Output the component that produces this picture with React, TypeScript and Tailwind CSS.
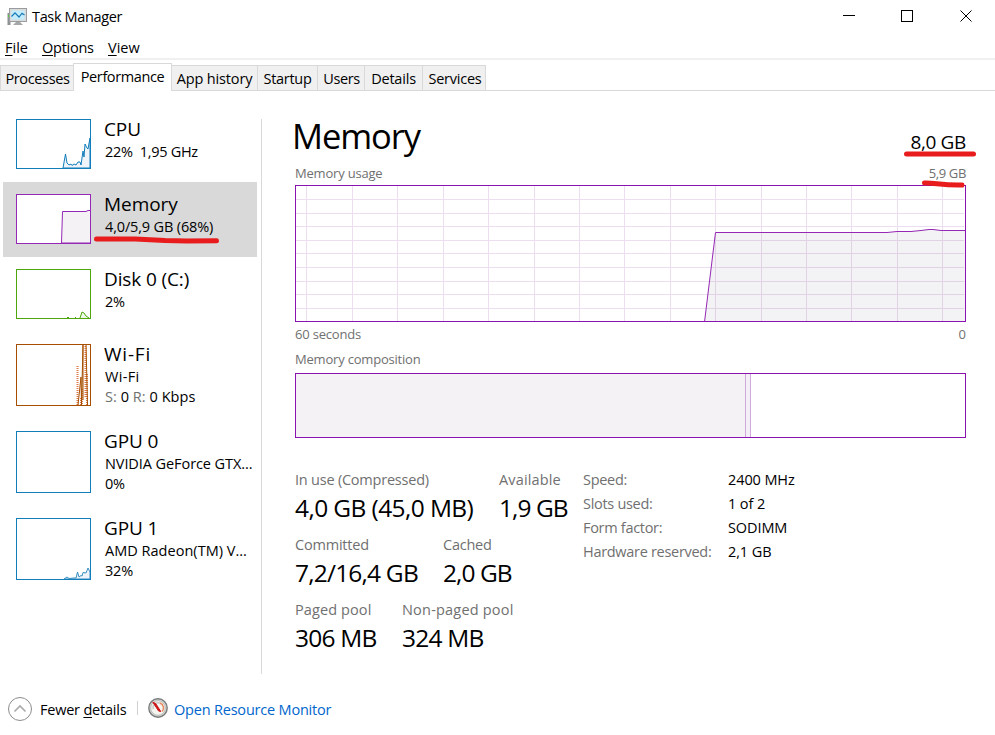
import type { ReactNode } from "react"
import clsx from "clsx"

const tabs = [
  { label: "Processes", width: "w-[73px]", tracking: "tracking-[-0.35px] pl-px" },
  { label: "Performance", width: "w-[99px]", tracking: "tracking-[-0.4px]", active: true },
  { label: "App history", width: "w-[86px]", tracking: "tracking-[-0.15px]" },
  { label: "Startup", width: "w-[60px]", tracking: "tracking-[-0.3px]" },
  { label: "Users", width: "w-[47px]", tracking: "tracking-[-0.4px] pl-px" },
  { label: "Details", width: "w-[58px]", tracking: "tracking-[-0.2px]" },
  { label: "Services", width: "w-[63px]", tracking: "tracking-[-0.25px] pl-[2px]" },
]

const specs = [
  { label: "Speed:", value: "2400 MHz" },
  { label: "Slots used:", value: "1 of 2" },
  { label: "Form factor:", value: "SODIMM" },
  { label: "Hardware reserved:", value: "2,1 GB" },
]

const gridX = [11, 57, 102, 148, 193, 239, 284, 329, 375, 420, 466, 511, 556, 602, 647]
const gridY = [14, 28, 41, 55, 68, 82, 96, 109, 123]

function MonitorIcon() {
  return (
    <svg className="w-5 h-[18px] shrink-0" viewBox="0 0 20 18">
      <rect x="0.5" y="5" width="3" height="12" fill="#8e9295" />
      <rect x="1" y="7" width="1.5" height="2" fill="#4fd33c" />
      <rect x="2.5" y="0.5" width="17" height="13" fill="#d8dadb" stroke="#9a9c9e" />
      <rect x="4.5" y="2.5" width="13" height="9" fill="#c3edfc" />
      <path d="M4.5 8.5 L8 4.8 L12 9 L15 5.2 L17.5 7" fill="none" stroke="#1979b4" strokeWidth="1.2" />
      <path d="M9 14 H13 L16 17 H6 Z" fill="#a5a7a8" />
    </svg>
  )
}

function GaugeIcon() {
  return (
    <svg className="w-5 h-5 shrink-0 -mt-[2px]" viewBox="0 0 20 20">
      <circle cx="10" cy="10" r="9.2" fill="#d9dbd8" stroke="#777b79" strokeWidth="1.4" />
      <circle cx="10" cy="10" r="7.3" fill="#f5f4ef" stroke="#aeb2af" strokeWidth="0.8" />
      <path d="M5.2 11 A5.2 5.2 0 0 1 12 5" fill="none" stroke="#c9ccca" strokeWidth="1.5" />
      <path d="M12 5 A5.4 5.4 0 0 1 14.3 13.5" fill="none" stroke="#e78a61" strokeWidth="1.5" />
      <path d="M4.8 4.2 L7.6 5.4 L12.8 13.5 L10.6 13 Z" fill="#cf1419" stroke="#cf1419" strokeWidth="1" />
    </svg>
  )
}

interface ResourceProps {
  title: string
  titleClass: string
  selected?: boolean
  tall?: boolean
  graph: ReactNode
  children: ReactNode
}

function Resource({ title, titleClass, selected, tall, graph, children }: ResourceProps) {
  return (
    <div
      className={clsx(
        "flex items-start w-[254px] pt-3 pl-[13px] shrink-0",
        tall ? "h-[87px]" : "h-[75px]",
        selected && "bg-[#d9d9d9]",
      )}
    >
      {graph}
      <div className="ml-[14px] -mt-px text-[14.5px] leading-5 whitespace-nowrap">
        <div className={clsx("text-[19px] leading-[22px] -ml-px", titleClass)}>{title}</div>
        {children}
      </div>
    </div>
  )
}

function Thumb({ tall, color, children }: { tall?: boolean; color: string; children?: ReactNode }) {
  const h = tall ? 62 : 50
  return (
    <svg className={clsx("w-[75px] shrink-0 bg-white", tall ? "h-[62px]" : "h-[50px]")} viewBox={`0 0 75 ${h}`}>
      {children}
      <rect x="0.5" y="0.5" width="74" height={h - 1} fill="none" stroke={color} />
    </svg>
  )
}

function Sidebar() {
  return (
    <div className="w-[259px] shrink-0 h-[555px] mt-7 border-r border-[#d9d9d9]">
      <div className="flex flex-col -mt-3">
        <Resource
          title="CPU"
          titleClass="tracking-[-0.1px]"
          graph={
            <Thumb color="#117dbb">
              <path
                d="M47 49 L49.5 35 L51 44 L53 46 L55 45 L56 46.5 L58 45 L60 46 L62 43 L64 43 L65 46 L67 32 L68 38 L69 25 L71 29 L72 30 L74 19 V49 Z"
                fill="#eef4fa"
                stroke="#117dbb"
              />
            </Thumb>
          }
        >
          <div className="mt-[2px] leading-[19px] tracking-[-0.28px] whitespace-pre">22%  1,95 GHz</div>
        </Resource>
        <Resource
          title="Memory"
          titleClass="tracking-[-0.05px]"
          selected
          graph={
            <Thumb color="#9528b4">
              <path d="M45.5 49 L46.5 17.5 H70 L72 16.5 H75 V49 Z" fill="#f4f2f4" stroke="#9528b4" />
            </Thumb>
          }
        >
          <div className="mt-[2px] leading-[19px] tracking-[-0.15px]">4,0/5,9 GB (68%)</div>
        </Resource>
        <Resource
          title="Disk 0 (C:)"
          titleClass="tracking-[-0.12px]"
          graph={
            <Thumb color="#4da60c">
              <path d="M51 49 L52 48 L53 49 M59 49 L60 48 M64 49 L66 43 L68 44 L70 47 L73 49" fill="#eff7e9" stroke="#4da60c" />
            </Thumb>
          }
        >
          <div className="mt-[2px] leading-[19px] tracking-[-0.4px]">2%</div>
        </Resource>
        <Resource
          title="Wi-Fi"
          titleClass="tracking-[0.8px]"
          tall
          graph={
            <Thumb tall color="#a74f01">
              <path d="M61.5 61 V22 M65 61 V54 M66 45 V61 M69.5 2 V54 M71 30 V61" fill="none" stroke="#df7b49" strokeWidth="2" strokeDasharray="1 1" />
              <path d="M62 61 L65 33 L65.5 61 L67 0 V56 M69 0 L70 0 L71.5 61" fill="none" stroke="#a74f01" />
            </Thumb>
          }
        >
          <div className="mt-[2px] tracking-[0.35px]">Wi-Fi</div>
          <div className="tracking-[0.05px]">
            <span className="text-[#707070]">S:</span> 0 <span className="text-[#707070]">R:</span> 0 Kbps
          </div>
        </Resource>
        <Resource title="GPU 0" titleClass="tracking-[-0.15px]" tall graph={<Thumb tall color="#117dbb" />}>
          <div className="mt-[2px] tracking-[-0.08px]">NVIDIA GeForce GTX...</div>
          <div className="tracking-[-0.4px]">0%</div>
        </Resource>
        <Resource
          title="GPU 1"
          titleClass="tracking-[-0.15px]"
          tall
          graph={
            <Thumb tall color="#117dbb">
              <path
                d="M48 61 L51 59 L53 60.5 L58 60 L60 60 L61.5 54 L63 59 L65 57.5 L66 58 L67 54.5 L70 55 L72 50 L74 54 V61 Z"
                fill="#eef4fa"
                stroke="#3b8fc0"
              />
            </Thumb>
          }
        >
          <div className="mt-[2px] tracking-[0.02px]">AMD Radeon(TM) V...</div>
          <div className="tracking-[-0.2px]">32%</div>
        </Resource>
      </div>
    </div>
  )
}

function UsageGraph() {
  return (
    <svg className="block w-[671px] h-[137px]" viewBox="0 0 671 137">
      {gridX.map((x) => (
        <path key={x} d={`M${x + 0.5} 1 V136`} stroke="#ecdef0" />
      ))}
      {gridY.map((y) => (
        <path key={y} d={`M1 ${y + 0.5} H669`} stroke="#ecdef0" />
      ))}
      <path d="M409.5 137 L420.5 47.5 H594 L636 44.5 L647 45.5 H670 V137 Z" fill="#2b0c35" fillOpacity="0.055" />
      <path
        d="M409.5 137 L420.5 47.5 H592 L602 46.5 L616 46.5 L626 45.5 L634 44.5 L638 44.5 L646 45.5 H670"
        fill="none"
        stroke="#9528b4"
      />
      <rect x="0.5" y="0.5" width="670" height="136" fill="none" stroke="#8b12ae" />
    </svg>
  )
}

interface StatProps {
  label: string
  value: string
  className: string
  labelClass: string
  valueClass: string
}

function Stat({ label, value, className, labelClass, valueClass }: StatProps) {
  return (
    <div className={clsx("h-[65px] shrink-0 whitespace-nowrap", className)}>
      <div className={clsx("text-[14.5px] leading-5 text-[#707070]", labelClass)}>{label}</div>
      <div className={clsx("text-[24.5px] leading-9", valueClass)}>{value}</div>
    </div>
  )
}

function MemoryPanel() {
  return (
    <div className="w-[671px] ml-[33px]">
      <div className="flex justify-between h-[73px]">
        <h1 className="text-[34.5px] leading-[46px] mt-[22px] -ml-[3px] tracking-[-1.1px]">Memory</h1>
        <div className="text-[19px] leading-6 mt-[39px] tracking-[-0.35px]">8,0 GB</div>
      </div>
      <div className="flex justify-between text-[13px] leading-[19px] h-[21px] text-[#707070]">
        <span className="tracking-[-0.2px]">Memory usage</span>
        <span className="tracking-[-0.35px]">5,9 GB</span>
      </div>
      <UsageGraph />
      <div className="flex justify-between text-[13px] leading-5 mt-[2px] text-[#707070]">
        <span className="tracking-[-0.2px]">60 seconds</span>
        <span>0</span>
      </div>
      <div className="text-[13px] leading-5 mt-[5px] mb-1 text-[#707070] tracking-[-0.2px]">Memory composition</div>
      <div className="flex h-[65px] border border-[#8b12ae]">
        <div className="w-[449px] bg-[#f4f2f4]" />
        <div className="w-[6px] bg-[#f4eef6] border-x border-[#cfaada]" />
      </div>
      <div className="flex mt-8">
        <div className="w-[288px]">
          <div className="flex">
            <Stat label="In use (Compressed)" value="4,0 GB (45,0 MB)" className="w-[204px]" labelClass="tracking-[-0.22px]" valueClass="tracking-[-0.6px]" />
            <Stat label="Available" value="1,9 GB" className="w-[80px]" labelClass="tracking-[0.15px]" valueClass="tracking-[-0.95px]" />
          </div>
          <div className="flex">
            <Stat label="Committed" value="7,2/16,4 GB" className="w-[148px]" labelClass="tracking-[-0.2px]" valueClass="tracking-[-0.8px]" />
            <Stat label="Cached" value="2,0 GB" className="w-[100px]" labelClass="tracking-[-0.25px]" valueClass="tracking-[-0.95px]" />
          </div>
          <div className="flex">
            <Stat label="Paged pool" value="306 MB" className="w-[107px]" labelClass="tracking-[0.1px]" valueClass="tracking-[-0.8px]" />
            <Stat label="Non-paged pool" value="324 MB" className="w-[120px]" labelClass="tracking-[0.2px]" valueClass="tracking-[-0.8px]" />
          </div>
        </div>
        <div className="text-[14.5px] leading-6 -mt-[2px] whitespace-nowrap">
          {specs.map((spec) => (
            <div key={spec.label} className="flex">
              <span className="w-[145px] text-[#707070] tracking-[-0.3px]">{spec.label}</span>
              <span className="tracking-[-0.1px]">{spec.value}</span>
            </div>
          ))}
        </div>
      </div>
    </div>
  )
}

export default function App() {
  return (
    <div className="relative flex flex-col w-[995px] h-[735px] overflow-hidden bg-white text-black font-['Open_Sans','Noto_Sans',sans-serif]">
      {/* Title bar */}
      <div className="flex items-center h-[34px] pl-[7px] pr-[22px] shrink-0">
        <MonitorIcon />
        <span className="ml-[5px] text-[14.5px] leading-5 tracking-[-0.35px]">Task Manager</span>
        <svg className="ml-auto w-[130px] h-3 -mt-[2px]" viewBox="0 0 130 12" fill="none" stroke="#000">
          <path d="M0 5.5 H12" />
          <rect x="58.5" y="0.5" width="11" height="11" />
          <path d="M117.5 0.5 L128.5 11.5 M128.5 0.5 L117.5 11.5" />
        </svg>
      </div>

      {/* Menu */}
      <div className="flex h-6 shrink-0 pl-[5px] text-[14.5px] leading-[27px]">
        <span className="w-[37px] tracking-[0px]"><u className="underline-offset-2">F</u>ile</span>
        <span className="w-[66px] tracking-[-0.25px]"><u className="underline-offset-2">O</u>ptions</span>
        <span className="tracking-[0px]"><u className="underline-offset-2">V</u>iew</span>
      </div>
      <div className="h-[2px] shrink-0 bg-[#f0f0f0]" />

      {/* Tabs */}
      <div className="flex items-end h-[31px] shrink-0 border-b border-[#d9d9d9] text-[14.5px] whitespace-nowrap">
        {tabs.map((tab) => (
          <div
            key={tab.label}
            className={clsx(
              "flex justify-center border-t border-[#d9d9d9]",
              tab.width,
              tab.tracking,
              tab.active
                ? "h-7 -mb-px border-x bg-white leading-[26px]"
                : "h-[25px] bg-[#f0f0f0] leading-[25px]",
              !tab.active && tab.label !== "Processes" && "border-r",
              tab.label === "Processes" && "border-l",
            )}
          >
            {tab.label}
          </div>
        ))}
      </div>

      <div className="flex h-[582px] shrink-0 pl-[3px]">
        <Sidebar />
        <MemoryPanel />
      </div>

      {/* Footer */}
      <div className="flex items-center h-[72px] shrink-0 pl-2 text-[14.5px] leading-5">
        <svg className="w-6 h-6" viewBox="0 0 24 24" fill="none">
          <circle cx="12" cy="12" r="11.5" stroke="#8c8c8c" />
          <path d="M6.5 14.5 L12 9 L17.5 14.5" stroke="#aaaaaa" strokeWidth="1.6" />
        </svg>
        <span className="ml-2 mt-px w-[97px] tracking-[-0.22px]">
          Fewer <u className="underline-offset-2">d</u>etails
        </span>
        <div className="w-px h-[14px] mr-[10px] -mt-[2px] bg-[#d0d0d0]" />
        <GaugeIcon />
        <span className="ml-[6px] mt-px text-[#0066cc] tracking-[-0.2px]">Open Resource Monitor</span>
      </div>

      {/* Marker strokes over the memory figures */}
      <svg className="absolute inset-0 w-full h-full pointer-events-none" viewBox="0 0 995 735" fill="none" stroke="#e81c1c" strokeWidth="5" strokeLinecap="round">
        <path d="M96.5 239 L135 239 L165 240.5 L187 241 L216.5 240.7" />
        <path d="M906.5 154 H973.5" />
        <path d="M924.5 183 C934 182.5 942 185.5 962 185" />
      </svg>
    </div>
  )
}
